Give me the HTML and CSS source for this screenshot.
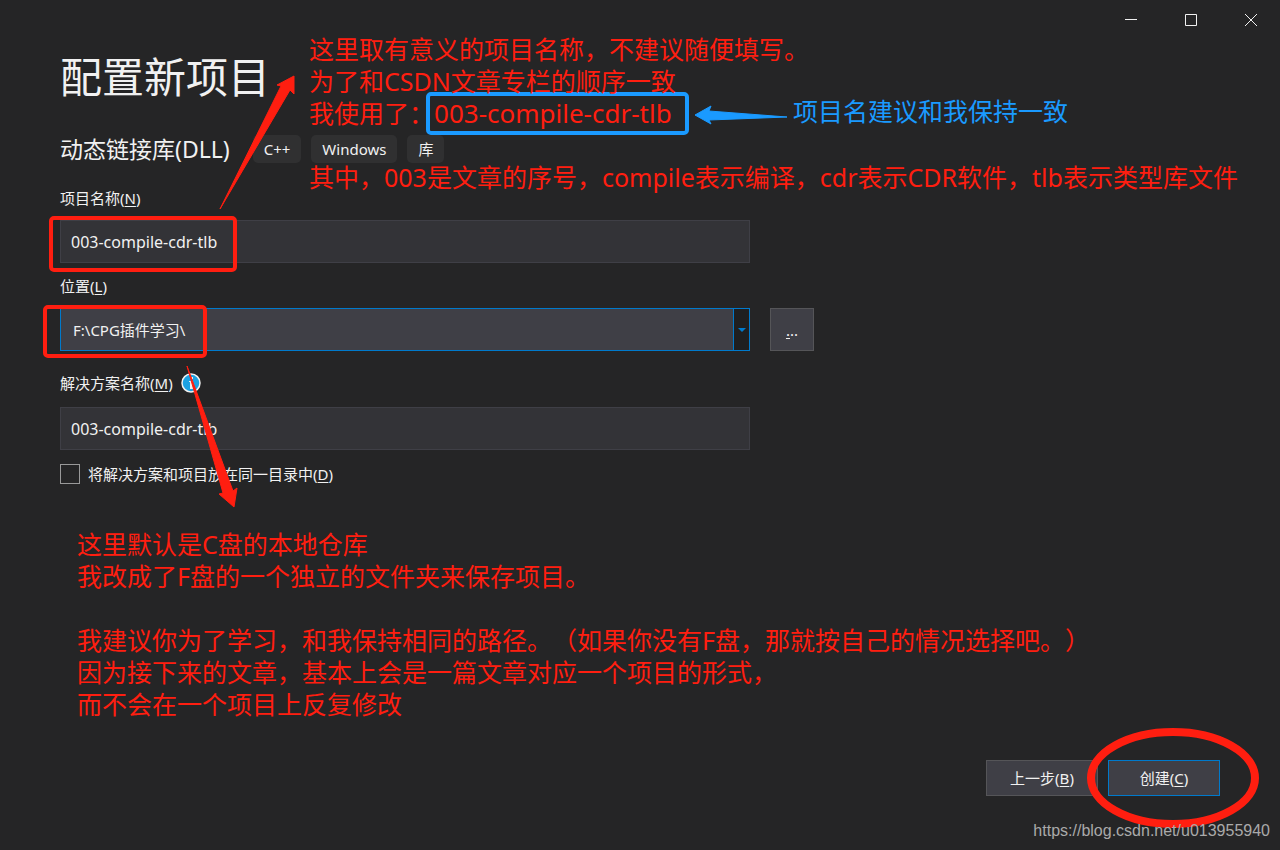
FILE: index.html
```html
<!DOCTYPE html>
<html lang="zh-CN">
<head>
    <meta charset="UTF-8">
    <meta name="viewport" content="width=device-width, initial-scale=1.0">
    <title>配置新项目</title>
    <link rel="stylesheet" href="styles.css">
</head>
<body>
    <header class="titlebar">
        <button type="button" aria-label="最小化">
            <svg width="16" height="16" viewBox="0 0 16 16"><path d="M3 7.500h12"/></svg>
        </button>
        <button type="button" aria-label="最大化">
            <svg width="16" height="16" viewBox="0 0 16 16"><path d="M3.500 2.500h11v11h-11z"/></svg>
        </button>
        <button type="button" aria-label="关闭">
            <svg width="16" height="16" viewBox="0 0 16 16"><path d="M3 2l12 12M15 2L3 14"/></svg>
        </button>
    </header>

    <main>
        <h1>配置新项目</h1>
        <div class="template">
            <h2>动态链接库(DLL)</h2>
            <ul class="tags">
                <li>C++</li>
                <li>Windows</li>
                <li>库</li>
            </ul>
        </div>

        <form id="projectForm">
            <div class="field">
                <label for="projectName">项目名称(<u>N</u>)</label>
                <input type="text" id="projectName" value="003-compile-cdr-tlb">
            </div>

            <div class="field">
                <label for="location">位置(<u>L</u>)</label>
                <div class="location-row">
                    <div class="combo">
                        <select id="location">
                            <option>F:\CPG插件学习\</option>
                        </select>
                        <span class="combo-arrow"></span>
                    </div>
                    <button type="button" class="browse" aria-label="浏览"><u>.</u>..</button>
                </div>
            </div>

            <div class="field solution">
                <label for="solutionName">解决方案名称(<u>M</u>)
                    <svg class="info" width="20" height="20" viewBox="0 0 20 20">
                        <circle cx="10" cy="10" r="9" fill="#1ba1e2" stroke="#f1f1f1" stroke-width="1.500"/>
                        <path d="M9 4h3v2H9zM8 8h4v8H9V9H8z" fill="#f1f1f1"/>
                    </svg>
                </label>
                <input type="text" id="solutionName" value="003-compile-cdr-tlb">
            </div>

            <div class="check">
                <input type="checkbox" id="sameDir">
                <label for="sameDir">将解决方案和项目放在同一目录中(<u>D</u>)</label>
            </div>
        </form>

        <p class="note">这里默认是C盘的本地仓库<br>
            我改成了F盘的一个独立的文件夹来保存项目。<br><br>
            我建议你为了学习，和我保持相同的路径。（如果你没有F盘，那就按自己的情况选择吧。）<br>
            因为接下来的文章，基本上会是一篇文章对应一个项目的形式，<br>
            而不会在一个项目上反复修改</p>
    </main>

    <footer>
        <button type="button">上一步(<u>B</u>)</button>
        <button type="submit" form="projectForm" class="create">创建(<u>C</u>)
            <svg class="circle-mark" width="176" height="104" viewBox="0 0 176 104">
                <ellipse cx="88" cy="52" rx="82" ry="46"/>
            </svg>
        </button>
    </footer>

    <!-- hand-drawn boxes and arrows -->
    <svg class="marks" width="1280" height="850" viewBox="0 0 1280 850">
        <g class="box red">
            <rect x="51" y="218" width="184" height="52" rx="3"/>
            <rect x="45" y="307" width="160" height="49" rx="3"/>
        </g>
        <rect class="box blue" x="428" y="94" width="259" height="39" rx="3"/>
        <path class="arrow-red" d="M220 209L281 86L277 85L294 76V94L290 90Z"/>
        <path class="arrow-red" d="M187 366L223 493L219 494L234 507L237 488L233 491Z"/>
        <path class="arrow-blue" d="M695 115L711 106L709 111L787 117L709 120L711 124Z"/>
    </svg>

    <p class="note note-top">这里取有意义的项目名称，不建议随便填写。<br>
        为了和CSDN文章专栏的顺序一致<br>
        我使用了：<span class="name">003-compile-cdr-tlb</span><br><br>
        其中，003是文章的序号，compile表示编译，cdr表示CDR软件，tlb表示类型库文件</p>
    <p class="note note-blue">项目名建议和我保持一致</p>

    <a class="watermark" href="https://blog.csdn.net/u013955940">https://blog.csdn.net/u013955940</a>
</body>
</html>
```

FILE: styles.css
```css
* {
    box-sizing: border-box;
}

body {
    position: relative;
    display: flex;
    flex-direction: column;
    min-height: 100vh;
    margin: 0;
    background: #252526;
    color: #f1f1f1;
    font-family: "Noto Sans", "Noto Sans CJK SC", sans-serif;
    font-size: 15px;
    line-height: 20px;
    text-spacing-trim: space-all;
}

h1, h2, p, ul {
    margin: 0;
    padding: 0;
    font-weight: normal;
}

button, input, select {
    font: inherit;
    color: inherit;
}

u {
    text-underline-offset: 2px;
}

.titlebar {
    display: flex;
    justify-content: flex-end;
}

.titlebar button {
    display: flex;
    align-items: center;
    justify-content: center;
    width: 60px;
    height: 40px;
    padding: 0;
    background: none;
    border: none;
}

.titlebar svg {
    fill: none;
    stroke: #f1f1f1;
}

main {
    flex: 1;
    padding: 9px 60px 0;
}

h1 {
    font-size: 42px;
    line-height: 56px;
}

.template {
    display: flex;
    align-items: center;
    gap: 23px;
    margin-top: 30px;
}

h2 {
    font-size: 23px;
    line-height: 28px;
}

.tags {
    display: flex;
    gap: 10px;
    list-style: none;
}

.tags li {
    padding: 4px 11px;
    background: #303031;
    border-radius: 5px;
    line-height: 20px;
}

form {
    margin-top: 25px;
}

.field {
    display: flex;
    flex-direction: column;
    gap: 12px;
    max-width: 690px;
    margin-bottom: 13px;
}

.field label {
    display: flex;
    align-items: center;
    height: 20px;
}

.field input, .combo select {
    width: 100%;
    height: 43px;
    padding: 0 10px;
    background: #333337;
    border: 1px solid #3f3f46;
    outline: none;
}

.field input {
    font-size: 16px;
}

.location-row {
    display: flex;
    gap: 20px;
    margin-right: -64px;
}

.combo {
    position: relative;
    flex: 1;
}

.combo select {
    display: block;
    appearance: none;
    padding-left: 12px;
    background: #3f3f46;
    border-color: #007acc;
    border-radius: 0;
}

.combo-arrow {
    position: absolute;
    top: 1px;
    right: 1px;
    bottom: 1px;
    display: flex;
    align-items: center;
    justify-content: center;
    width: 16px;
    background: #1f1f20;
    border-left: 1px solid #007acc;
    pointer-events: none;
}

.combo-arrow::after {
    content: "";
    border: 4px solid transparent;
    border-top-color: #007acc;
    border-bottom: none;
}

.browse {
    width: 44px;
    background: #3f3f46;
    border: 1px solid #555558;
}

.solution {
    gap: 14px;
    margin: 22px 0 14px;
}

.info {
    margin-left: 8px;
}

.check {
    display: flex;
    align-items: center;
    gap: 8px;
}

.check input {
    appearance: none;
    width: 20px;
    height: 20px;
    margin: 0;
    border: 1px solid #999999;
}

.note {
    margin: 44px 0 0 17px;
    color: #ff1e10;
    font-size: 25px;
    line-height: 32px;
}

.note-top {
    position: absolute;
    top: 33px;
    left: 309px;
    margin: 0;
    white-space: nowrap;
}

.name {
    font-size: 26px;
}

.note-blue {
    position: absolute;
    top: 95px;
    left: 793px;
    margin: 0;
    color: #1a9aff;
    white-space: nowrap;
}

footer {
    display: flex;
    justify-content: flex-end;
    gap: 10px;
    padding: 0 60px 54px;
}

footer button {
    width: 112px;
    height: 36px;
    padding: 0;
    background: #3f3f46;
    border: 1px solid #555558;
}

footer .create {
    position: relative;
    border-color: #007acc;
}

.circle-mark {
    position: absolute;
    top: -35px;
    left: -24px;
    fill: none;
    stroke: #ff1e10;
    stroke-width: 8;
    pointer-events: none;
}

.marks {
    position: absolute;
    top: 0;
    left: 0;
    pointer-events: none;
}

.box {
    fill: none;
    stroke-width: 4;
}

.red {
    stroke: #ff1e10;
}

.blue {
    stroke: #1a9aff;
}

.arrow-red {
    fill: #ff1e10;
    stroke: #ff1e10;
}

.arrow-blue {
    fill: #1a9aff;
    stroke: #1a9aff;
}

.watermark {
    position: absolute;
    right: 10px;
    bottom: 9px;
    color: #aaaaaa;
    font-family: "Liberation Sans", Arial, sans-serif;
    font-size: 16px;
    text-decoration: none;
}
```
